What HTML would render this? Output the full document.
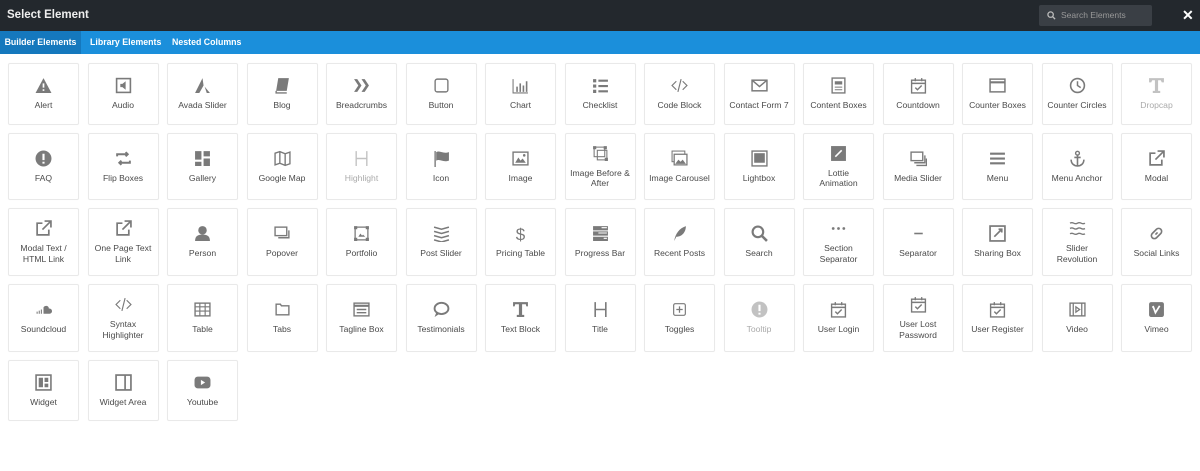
<!DOCTYPE html>
<html><head><meta charset="utf-8"><style>
*{box-sizing:border-box;margin:0;padding:0}
body{width:1200px;height:471px;background:#fff;font-family:"Liberation Sans",sans-serif;overflow:hidden;position:relative}
.hd{position:absolute;left:0;top:0;width:1200px;height:31px;background:#23282d}
.hd h1{position:absolute;left:7px;top:9px;font-size:11.5px;font-weight:bold;color:#eee}
.srch{position:absolute;left:1039px;top:5px;width:113px;height:21px;background:#3a3f45;border-radius:2px;color:#999;font-size:8.5px;line-height:21px;padding-left:22px}
.srch svg{position:absolute;left:8px;top:6px}
.x{position:absolute;left:1182px;top:7px;color:#fff;font-size:14px;font-weight:bold}
.tabs{position:absolute;left:0;top:31px;width:1200px;height:23px;background:#1b8fdb}
.tabs span{position:absolute;top:0;height:23px;line-height:23px;font-size:8.8px;font-weight:bold;color:#fff}
.grid{position:absolute;left:8px;top:63px;display:grid;grid-template-columns:repeat(15,71px);column-gap:8.5px;row-gap:8px;grid-template-rows:62px 67px 68px 68px 61px}
.c{border:1px solid #e9e9e9;border-radius:2px;display:flex;flex-direction:column;align-items:center;justify-content:center;text-align:center;font-size:8.6px;line-height:10.5px;color:#4a4a4a;box-shadow:0 0 1px rgba(0,0,0,.04)}
.c svg{width:17px;height:17px;margin-bottom:6px;fill:#7a7a7a;stroke:#7a7a7a}
.c.d{color:#aaa}.c.d svg{fill:#c2c2c2;stroke:#c2c2c2}
</style></head><body>
<div class="hd"><h1>Select Element</h1>
<div class="srch"><svg width="9" height="9" viewBox="0 0 10 10"><circle cx="4" cy="4" r="3" fill="none" stroke="#bbb" stroke-width="1.4"/><path d="M6.3 6.3L9 9" stroke="#bbb" stroke-width="1.5"/></svg>Search Elements</div>
<div class="x">✕</div></div>
<div class="tabs"><span style="left:0;width:81px;background:#1578bd;text-align:center">Builder Elements</span><span style="left:90px">Library Elements</span><span style="left:172px">Nested Columns</span></div>
<div class="grid">
<div class="c"><svg viewBox="0 0 16 16"><path d="M8 1L15.5 15H.5z" stroke="none"/><path d="M8 6v4M8 11.5v1.5" stroke="#fff" stroke-width="1.6"/></svg>Alert</div>
<div class="c"><svg viewBox="0 0 16 16"><rect x="1.5" y="1.5" width="13" height="13" fill="none" stroke-width="1.5"/><path d="M5 6.5h2l3-2.5v8l-3-2.5H5z" stroke="none"/></svg>Audio</div>
<div class="c"><svg viewBox="0 0 16 16"><path d="M8 1L1 15h4l4-7zM10 9l5 6h-3z" stroke="none"/></svg>Avada Slider</div>
<div class="c"><svg viewBox="0 0 16 16"><path d="M4 1h10l-2 12H2z" stroke="none"/><path d="M2 13v2h10" fill="none" stroke-width="1.3"/></svg>Blog</div>
<div class="c"><svg viewBox="0 0 16 16"><path d="M1 2h3l4 6-4 6H1l4-6zM8 2h3l4 6-4 6H8l4-6z" stroke="none"/></svg>Breadcrumbs</div>
<div class="c"><svg viewBox="0 0 16 16"><rect x="2" y="2" width="12" height="12" rx="2" fill="none" stroke-width="1.3"/></svg>Button</div>
<div class="c"><svg viewBox="0 0 16 16"><path d="M1 2v13h14" fill="none" stroke-width="1"/><path d="M4 9h1.5v5H4zM7 6h1.5v8H7zM10 8h1.5v6H10zM13 4h1.5v10H13z" stroke="none"/></svg>Chart</div>
<div class="c"><svg viewBox="0 0 16 16"><path d="M1 2h3v3H1zM1 7h3v3H1zM1 12h3v3H1zM6 2.5h9v2H6zM6 7.5h9v2H6zM6 12.5h9v2H6z" stroke="none"/></svg>Checklist</div>
<div class="c"><svg viewBox="0 0 16 16"><path d="M5 4L1 8l4 4M11 4l4 4-4 4M9.5 2l-3 12" fill="none" stroke-width="1.1"/></svg>Code Block</div>
<div class="c"><svg viewBox="0 0 16 16"><rect x="1" y="3" width="14" height="10" fill="none" stroke-width="1.4"/><path d="M1 3l7 6 7-6" fill="none" stroke-width="1.4"/></svg>Contact Form 7</div>
<div class="c"><svg viewBox="0 0 16 16"><rect x="2" y="1" width="12" height="14" fill="none" stroke-width="1.3"/><path d="M4.5 4h7v3h-7zM4.5 9h7v1h-7zM4.5 11.5h7v1h-7z" stroke="none"/></svg>Content Boxes</div>
<div class="c"><svg viewBox="0 0 16 16"><rect x="1.5" y="3" width="13" height="12" fill="none" stroke-width="1.3"/><path d="M1.5 6h13M5 1v3M11 1v3M5 10l2 2 4-4" fill="none" stroke-width="1.3"/></svg>Countdown</div>
<div class="c"><svg viewBox="0 0 16 16"><rect x="1" y="2" width="14" height="12" fill="none" stroke-width="1.4"/><path d="M1 5h14" stroke-width="2"/></svg>Counter Boxes</div>
<div class="c"><svg viewBox="0 0 16 16"><circle cx="8" cy="8" r="6.5" fill="none" stroke-width="1.5"/><path d="M8 4v4l3 2" fill="none" stroke-width="1.4"/></svg>Counter Circles</div>
<div class="c d"><svg viewBox="0 0 16 16"><path d="M1 1h14v4h-2l-1-2H9.5v10h2v2h-7v-2h2V3H4L3 5H1z" stroke="none"/></svg>Dropcap</div>

<div class="c"><svg viewBox="0 0 16 16"><circle cx="8" cy="8" r="7.5" stroke="none"/><path d="M8 3.5v6M8 11v1.8" stroke="#fff" stroke-width="2"/></svg>FAQ</div>
<div class="c"><svg viewBox="0 0 16 16"><path d="M2 6V4h10M10 2l2 2-2 2M14 10v2H4M6 14l-2-2 2-2" fill="none" stroke-width="1.8"/></svg>Flip Boxes</div>
<div class="c"><svg viewBox="0 0 16 16"><path d="M1 1h6v8H1zM9 1h6v5H9zM9 8h6v7H9zM1 11h6v4H1z" stroke="none"/></svg>Gallery</div>
<div class="c"><svg viewBox="0 0 16 16"><path d="M1 3l4.5-1.5 5 2L15 2v11l-4.5 1.5-5-2L1 14zM5.5 1.5v11M10.5 3.5v11" fill="none" stroke-width="1.3"/></svg>Google Map</div>
<div class="c d"><svg viewBox="0 0 16 16"><path d="M3 1v14M13 1v14M3 8h10" fill="none" stroke-width="1.3"/></svg>Highlight</div>
<div class="c"><svg viewBox="0 0 16 16"><path d="M2 1v15" stroke-width="1.3"/><path d="M3 2c4-2 6 2 12 0v8c-6 2-8-2-12 0z" stroke="none"/></svg>Icon</div>
<div class="c"><svg viewBox="0 0 16 16"><rect x="1" y="2" width="14" height="12" fill="none" stroke-width="1.3"/><path d="M3 12l3-5 2 3 2-2 3 4z" stroke="none"/><circle cx="11.5" cy="5" r="1.2" stroke="none"/></svg>Image</div>
<div class="c"><svg viewBox="0 0 16 16"><rect x="2" y="2" width="10" height="9" fill="none" stroke-width="1"/><rect x="5" y="5" width="9" height="9" fill="none" stroke-width="1"/><path d="M1 1h3v3H1zM11 1h3v3h-3zM12 12h3v3h-3z" stroke="none"/></svg>Image Before &amp;<br>After</div>
<div class="c"><svg viewBox="0 0 16 16"><rect x="1" y="1" width="12" height="10" fill="none" stroke-width="1"/><rect x="3" y="4" width="12" height="10" fill="#fff" stroke-width="1.2"/><path d="M4 13l3-4 2 2 2-2 3 4z" stroke="none"/></svg>Image Carousel</div>
<div class="c"><svg viewBox="0 0 16 16"><rect x="1" y="1" width="14" height="14" fill="none" stroke-width="1.3"/><rect x="3" y="3" width="10" height="9" stroke="none"/></svg>Lightbox</div>
<div class="c"><svg viewBox="0 0 16 16"><rect x="1" y="1" width="14" height="14" stroke="none"/><path d="M5 11l6-6" stroke="#fff" stroke-width="1.5"/></svg>Lottie<br>Animation</div>
<div class="c"><svg viewBox="0 0 16 16"><rect x="1" y="2" width="11" height="8" fill="none" stroke-width="1.3"/><path d="M4 12h10V5M6 14.5h9.5V8" fill="none" stroke-width="1.3"/></svg>Media Slider</div>
<div class="c"><svg viewBox="0 0 16 16"><path d="M1 2.5h14v2H1zM1 7h14v2H1zM1 11.5h14v2H1z" stroke="none"/></svg>Menu</div>
<div class="c"><svg viewBox="0 0 16 16"><circle cx="8" cy="3" r="1.8" fill="none" stroke-width="1.3"/><path d="M8 5v10M5 7h6M2 9c0 4 3 6 6 6s6-2 6-6" fill="none" stroke-width="1.5"/></svg>Menu Anchor</div>
<div class="c"><svg viewBox="0 0 16 16"><path d="M7 3H2v11h11V9M9 1h6v6M15 1L7 9" fill="none" stroke-width="1.6"/></svg>Modal</div>

<div class="c"><svg viewBox="0 0 16 16"><path d="M7 3H2v11h11V9M9 1h6v6M15 1L7 9" fill="none" stroke-width="1.6"/></svg>Modal Text /<br>HTML Link</div>
<div class="c"><svg viewBox="0 0 16 16"><path d="M7 3H2v11h11V9M9 1h6v6M15 1L7 9" fill="none" stroke-width="1.6"/></svg>One Page Text<br>Link</div>
<div class="c"><svg viewBox="0 0 16 16"><circle cx="8" cy="5" r="4" stroke="none"/><path d="M1 15c0-5 3-6 7-6s7 1 7 6z" stroke="none"/></svg>Person</div>
<div class="c"><svg viewBox="0 0 16 16"><rect x="1" y="2" width="11" height="8" fill="none" stroke-width="1.3"/><path d="M4 12h10V5" fill="none" stroke-width="1.3"/></svg>Popover</div>
<div class="c"><svg viewBox="0 0 16 16"><rect x="2" y="2" width="12" height="12" fill="none" stroke-width="1.2"/><path d="M1 1h3v3H1zM12 1h3v3h-3zM1 12h3v3H1zM12 12h3v3h-3zM5 11l2-3 1.5 2 1-1 2 2z" stroke="none"/></svg>Portfolio</div>
<div class="c"><svg viewBox="0 0 16 16"><path d="M1 2l7 2 7-2M1 6l7 2 7-2M1 10l7 2 7-2M1 14l7 2 7-2" fill="none" stroke-width="1.4"/></svg>Post Slider</div>
<div class="c"><svg viewBox="0 0 16 16"><text x="8" y="14" text-anchor="middle" font-size="16" font-family="Liberation Sans" stroke="none">$</text></svg>Pricing Table</div>
<div class="c"><svg viewBox="0 0 16 16"><path d="M1 1h14v4H1zM1 6h14v4H1zM1 11h14v4H1z" stroke="none"/><path d="M9 2.5h5M6 7.5h8M11 12.5h3" stroke="#fff" stroke-width="1"/></svg>Progress Bar</div>
<div class="c"><svg viewBox="0 0 16 16"><path d="M3 15C4 8 8 3 14 1c0 6-4 10-9 10" stroke="none"/></svg>Recent Posts</div>
<div class="c"><svg viewBox="0 0 16 16"><circle cx="6.5" cy="6.5" r="5" fill="none" stroke-width="2"/><path d="M10 10l5 5" stroke-width="2.4"/></svg>Search</div>
<div class="c"><svg viewBox="0 0 16 16"><circle cx="3" cy="8" r="1.3" stroke="none"/><circle cx="8" cy="8" r="1.3" stroke="none"/><circle cx="13" cy="8" r="1.3" stroke="none"/></svg>Section<br>Separator</div>
<div class="c"><svg viewBox="0 0 16 16"><path d="M4 8h8" stroke-width="1.5"/></svg>Separator</div>
<div class="c"><svg viewBox="0 0 16 16"><rect x="1" y="1" width="14" height="14" fill="none" stroke-width="1.6"/><path d="M9 4h3v3M12 4l-7 7" fill="none" stroke-width="1.6"/></svg>Sharing Box</div>
<div class="c"><svg viewBox="0 0 16 16"><path d="M1 3c3-2 4 2 7 0s4 2 7 0M1 8c3-2 4 2 7 0s4 2 7 0M1 13c3-2 4 2 7 0s4 2 7 0" fill="none" stroke-width="1.3"/></svg>Slider<br>Revolution</div>
<div class="c"><svg viewBox="0 0 16 16"><path d="M7 9l2-2M6 6L8 4a2.5 2.5 0 0 1 4 4l-2 2M10 10L8 12a2.5 2.5 0 0 1-4-4l2-2" fill="none" stroke-width="1.5"/></svg>Social Links</div>

<div class="c"><svg viewBox="0 0 16 16"><path d="M8 6c1-2 5-2 5 1 2 0 3 1 3 2.5S15 12 13 12H8z" stroke="none"/><path d="M2 10v2M4 9v3M6 8v4" stroke-width="1"/></svg>Soundcloud</div>
<div class="c"><svg viewBox="0 0 16 16"><path d="M5 4L1 8l4 4M11 4l4 4-4 4M9.5 2l-3 12" fill="none" stroke-width="1.1"/></svg>Syntax<br>Highlighter</div>
<div class="c"><svg viewBox="0 0 16 16"><rect x="1" y="2" width="14" height="12" fill="none" stroke-width="1.3"/><path d="M1 5.5h14M1 9.5h14M5.5 2v12M10.5 2v12" fill="none" stroke-width="1.1"/></svg>Table</div>
<div class="c"><svg viewBox="0 0 16 16"><path d="M2 3h4l1 1.5h7V13H2z" fill="none" stroke-width="1.3"/></svg>Tabs</div>
<div class="c"><svg viewBox="0 0 16 16"><rect x="1" y="2" width="14" height="12" fill="none" stroke-width="1.3"/><path d="M1 4.5h14" stroke-width="2"/><path d="M3.5 8h9M3.5 11h9" stroke-width="1.3"/></svg>Tagline Box</div>
<div class="c"><svg viewBox="0 0 16 16"><ellipse cx="8" cy="7" rx="6.5" ry="5.3" fill="none" stroke-width="1.8"/><path d="M3 11l-1.5 4 4-2.5" stroke="none"/></svg>Testimonials</div>
<div class="c"><svg viewBox="0 0 16 16"><path d="M1 1h14v4h-1.5L13 3H9.5v10h2v2h-7v-2h2V3H3L2.5 5H1z" stroke="none"/></svg>Text Block</div>
<div class="c"><svg viewBox="0 0 16 16"><path d="M3 1v14M13 1v14M3 8h10" fill="none" stroke-width="1.5"/></svg>Title</div>
<div class="c"><svg viewBox="0 0 16 16"><rect x="2.5" y="2.5" width="11" height="11" rx="1.5" fill="none" stroke-width="1.1"/><path d="M8 5v6M5 8h6" stroke-width="1.2"/></svg>Toggles</div>
<div class="c d"><svg viewBox="0 0 16 16"><circle cx="8" cy="8" r="7.5" stroke="none"/><path d="M8 3.5v6M8 11v1.8" stroke="#fff" stroke-width="2"/></svg>Tooltip</div>
<div class="c"><svg viewBox="0 0 16 16"><rect x="1.5" y="3" width="13" height="12" fill="none" stroke-width="1.3"/><path d="M1.5 6h13M5 1v3M11 1v3M5 10l2 2 4-4" fill="none" stroke-width="1.3"/></svg>User Login</div>
<div class="c"><svg viewBox="0 0 16 16"><rect x="1.5" y="3" width="13" height="12" fill="none" stroke-width="1.3"/><path d="M1.5 6h13M5 1v3M11 1v3M5 10l2 2 4-4" fill="none" stroke-width="1.3"/></svg>User Lost<br>Password</div>
<div class="c"><svg viewBox="0 0 16 16"><rect x="1.5" y="3" width="13" height="12" fill="none" stroke-width="1.3"/><path d="M1.5 6h13M5 1v3M11 1v3M5 10l2 2 4-4" fill="none" stroke-width="1.3"/></svg>User Register</div>
<div class="c"><svg viewBox="0 0 16 16"><rect x="1" y="2" width="14" height="12" fill="none" stroke-width="1.3"/><path d="M4 2v12M12 2v12M6.5 5.5v5l3.5-2.5z" fill="none" stroke-width="1.2"/></svg>Video</div>
<div class="c"><svg viewBox="0 0 16 16"><rect x="1" y="1" width="14" height="14" rx="2" stroke="none"/><path d="M4 6l1-.5 2 5.5 4-6.5" fill="none" stroke="#fff" stroke-width="1.6"/></svg>Vimeo</div>

<div class="c"><svg viewBox="0 0 16 16"><rect x="1" y="1" width="14" height="14" fill="none" stroke-width="1.5"/><path d="M3.5 3.5h4v9h-4zM9 3.5h3.5v4H9zM9 9h3.5v3.5H9z" stroke="none"/></svg>Widget</div>
<div class="c"><svg viewBox="0 0 16 16"><rect x="1" y="1" width="14" height="14" fill="none" stroke-width="1.6"/><path d="M9.5 1v14" stroke-width="1.6"/></svg>Widget Area</div>
<div class="c"><svg viewBox="0 0 16 16"><rect x="0.5" y="2.5" width="15" height="11" rx="3" stroke="none"/><path d="M6.5 5.5v5l4-2.5z" fill="#fff" stroke="none"/></svg>Youtube</div>
</div>
</body></html>
